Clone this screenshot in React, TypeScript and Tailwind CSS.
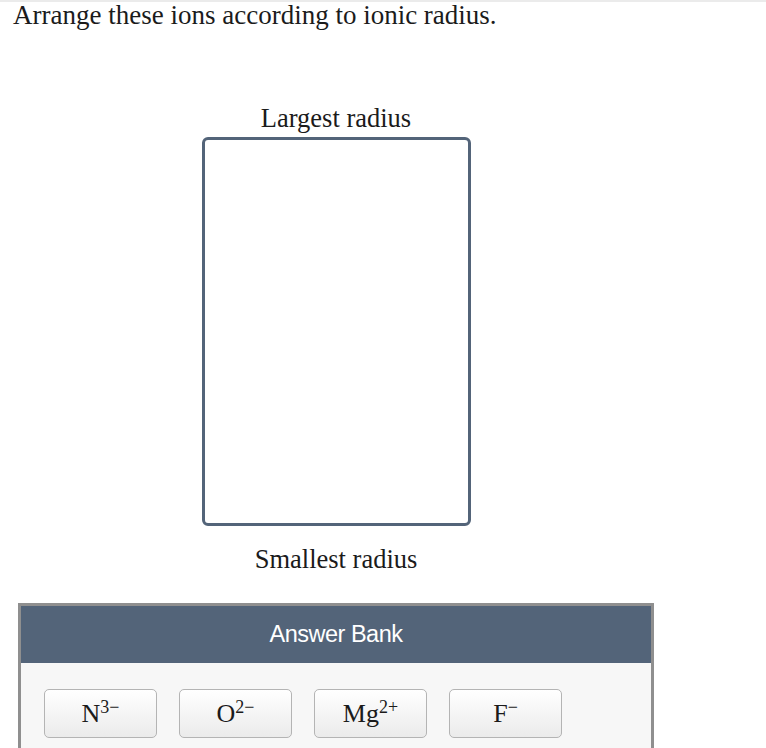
const ions = [
  { base: "N", charge: "3−" },
  { base: "O", charge: "2−" },
  { base: "Mg", charge: "2+" },
  { base: "F", charge: "−" },
];

function IonChip({ base, charge }: { base: string; charge: string }) {
  return (
    <button className="w-[113px] h-[49px] rounded-[5px] border border-[#b4b4b4] bg-linear-to-b from-white to-[#ebebeb] flex items-center justify-center text-[26px] leading-[24px] text-[#1b1b1b] font-['Liberation_Serif',serif]">
      <span>
        {base}
        <sup className="text-[18px]">{charge}</sup>
      </span>
    </button>
  );
}

export default function App() {
  return (
    <div className="w-[766px] h-[748px] overflow-hidden bg-white font-['Liberation_Serif',serif] text-[#1b1b1b]">
      <div className="h-[2px] bg-[#ebebeb]" />
      <p className="-mt-[2px] pl-[13px] text-[27px] leading-[30px]">
        Arrange these ions according to ionic radius.
      </p>

      {/* ranking column */}
      <div className="ml-[18px] w-[636px] flex flex-col items-center">
        <p className="mt-[76px] text-[26.5px] leading-[24px]">Largest radius</p>
        <div className="mt-[7px] w-[269px] h-[389px] rounded-[6px] border-[3px] border-[#536479] bg-white" />
        <p className="mt-[21px] text-[26.5px] leading-[24px]">Smallest radius</p>
      </div>

      {/* answer bank */}
      <div className="mt-[32px] ml-[18px] w-[636px] border-[3px] border-b-0 border-[#8f8f8f]">
        <div className="h-[57px] bg-[#536479] flex items-center justify-center">
          <span className="text-white text-[23.5px] tracking-[-0.5px] font-['Liberation_Sans',Arial,sans-serif]">
            Answer Bank
          </span>
        </div>
        <div className="bg-[#f7f7f7] px-[23px] pt-[26px] pb-[30px] flex gap-[22px]">
          {ions.map((ion) => (
            <IonChip key={ion.base} base={ion.base} charge={ion.charge} />
          ))}
        </div>
      </div>
    </div>
  );
}
